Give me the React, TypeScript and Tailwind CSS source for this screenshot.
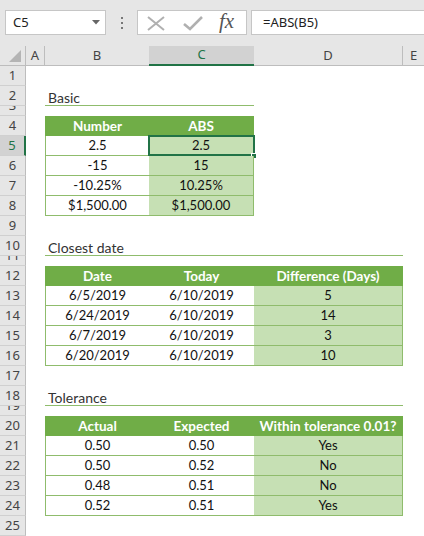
import React from 'react';

type Kind = 'none' | 'title' | 'line' | 'head' | 'white' | 'green';

interface CellDef {
  kind: Kind;
  text?: string;
  first?: boolean;
  last?: boolean;
  sel?: boolean;
}

interface RowDef {
  n: number;
  h?: number;
  active?: boolean;
  B?: CellDef;
  C?: CellDef;
  D?: CellDef;
}

const W = { A: 'w-[19px]', B: 'w-[104px]', C: 'w-[105px]', D: 'w-[149px]' };

const t = (text: string): CellDef => ({ kind: 'title', text, first: true });
const l: CellDef = { kind: 'line' };

function head3(a: string, b: string, c: string) {
  return {
    B: { kind: 'head' as Kind, text: a, first: true },
    C: { kind: 'head' as Kind, text: b },
    D: { kind: 'head' as Kind, text: c, last: true },
  };
}

function body3(a: string, b: string, c: string) {
  return {
    B: { kind: 'white' as Kind, text: a, first: true },
    C: { kind: 'white' as Kind, text: b },
    D: { kind: 'green' as Kind, text: c, last: true },
  };
}

const rows: RowDef[] = [
  { n: 1 },
  { n: 2, B: t('Basic'), C: l },
  { n: 3, h: 10 },
  { n: 4, B: { kind: 'head', text: 'Number', first: true }, C: { kind: 'head', text: 'ABS', last: true } },
  { n: 5, active: true, B: { kind: 'white', text: '2.5', first: true }, C: { kind: 'green', text: '2.5', last: true, sel: true } },
  { n: 6, B: { kind: 'white', text: '-15', first: true }, C: { kind: 'green', text: '15', last: true } },
  { n: 7, B: { kind: 'white', text: '-10.25%', first: true }, C: { kind: 'green', text: '10.25%', last: true } },
  { n: 8, B: { kind: 'white', text: '$1,500.00', first: true }, C: { kind: 'green', text: '$1,500.00', last: true } },
  { n: 9 },
  { n: 10, B: t('Closest date'), C: l, D: l },
  { n: 11, h: 10 },
  { n: 12, ...head3('Date', 'Today', 'Difference (Days)') },
  { n: 13, ...body3('6/5/2019', '6/10/2019', '5') },
  { n: 14, ...body3('6/24/2019', '6/10/2019', '14') },
  { n: 15, ...body3('6/7/2019', '6/10/2019', '3') },
  { n: 16, ...body3('6/20/2019', '6/10/2019', '10') },
  { n: 17 },
  { n: 18, B: t('Tolerance'), C: l, D: l },
  { n: 19, h: 10 },
  { n: 20, ...head3('Actual', 'Expected', 'Within tolerance 0.01?') },
  { n: 21, ...body3('0.50', '0.50', 'Yes') },
  { n: 22, ...body3('0.50', '0.52', 'No') },
  { n: 23, ...body3('0.48', '0.51', 'No') },
  { n: 24, ...body3('0.52', '0.51', 'Yes') },
  { n: 25 },
];

function Cell({ def, w }: { def?: CellDef; w: string }) {
  if (!def || def.kind === 'none') return <div className={`${w} shrink-0 h-full`} />;
  const side = `${def.first ? 'border-l' : ''} ${def.last ? 'border-r' : ''}`;
  if (def.kind === 'title' || def.kind === 'line') {
    return (
      <div className={`${w} shrink-0 h-full border-b border-[#8fbc6c] flex items-end pl-[3px] text-[14px] leading-[16px] text-[#333] whitespace-nowrap overflow-visible`}>
        <span className="translate-y-[1px]">{def.text}</span>
      </div>
    );
  }
  if (def.kind === 'head') {
    return (
      <div className={`${w} shrink-0 h-full bg-[#70ad47] border-[#70ad47] ${side} flex items-center justify-center text-[13.5px] font-bold text-white whitespace-nowrap`}>
        {def.text}
      </div>
    );
  }
  const bg = def.kind === 'green' ? 'bg-[#c6e0b4]' : 'bg-white';
  return (
    <div className={`${w} shrink-0 h-full relative ${bg} border-b border-[#8fbc6c] ${side} flex items-center justify-center text-[13px] text-[#111] whitespace-nowrap`}>
      {def.text}
      {def.sel && (
        <>
          <div className="absolute -left-px -top-[1px] -right-[2px] -bottom-[1px] border-2 border-[#217346] pointer-events-none" />
          <div className="absolute -right-[4px] -bottom-[4px] w-[6px] h-[6px] bg-[#217346] border border-white" />
        </>
      )}
    </div>
  );
}

function Row({ r }: { r: RowDef }) {
  const h = r.h ?? 20;
  return (
    <div className="flex" style={{ height: h }}>
      <div
        className={`w-[26px] shrink-0 h-full border-b border-r border-[#d0d0d0] overflow-hidden text-[13px] font-['Noto_Sans',sans-serif] ${
          r.active ? 'bg-[#d2d2d2] text-[#217346] border-r-2 border-r-[#217346]' : 'bg-[#e6e6e6] text-[#444] border-r-[#bdbdbd]'
        }`}
      >
        {h < 20 ? (
          <div className="h-[20px] -mt-[11px] leading-[20px] text-center">{r.n}</div>
        ) : (
          <div className="h-full leading-[19px] text-center">{r.n}</div>
        )}
      </div>
      <div className={`${W.A} shrink-0 h-full`} />
      <Cell def={r.B} w={W.B} />
      <Cell def={r.C} w={W.C} />
      <Cell def={r.D} w={W.D} />
      <div className="flex-1 h-full" />
    </div>
  );
}

function Toolbar() {
  return (
    <div className="h-[46px] bg-[#e6e6e6] flex items-start pt-[10px] pl-[5px] font-['Noto_Sans',sans-serif] text-[13px] text-[#222]">
      <div className="w-[101px] h-[25px] bg-white border border-[#c6c6c6] flex items-center pl-[7px] pr-[5px] justify-between">
        <span>C5</span>
        <svg width="8" height="5" viewBox="0 0 8 5">
          <path d="M0 0 L8 0 L4 4.5 Z" fill="#666" />
        </svg>
      </div>
      <div className="w-[31px] h-[25px] flex flex-col items-center justify-center gap-[3px]">
        <span className="w-[2px] h-[2px] bg-[#777]" />
        <span className="w-[2px] h-[2px] bg-[#777]" />
        <span className="w-[2px] h-[2px] bg-[#777]" />
      </div>
      <div className="w-[110px] h-[25px] bg-white border border-[#c6c6c6] flex items-center pl-[9px]">
        <svg width="18" height="15" viewBox="0 0 18 15" className="mt-[1px]">
          <path d="M1 1 L17 14 M17 1 L1 14" stroke="#b0b0b0" strokeWidth="2" fill="none" />
        </svg>
        <svg width="20" height="15" viewBox="0 0 20 15" className="ml-[18px] mt-[2px]">
          <path d="M1 8 L7 13 L19 1" stroke="#b0b0b0" strokeWidth="2.6" fill="none" />
        </svg>
        <span className="ml-[16px] font-['Liberation_Serif',serif] italic text-[21px] leading-none text-[#555] -mt-[2px]">fx</span>
      </div>
      <div className="flex-1 ml-[4px] h-[25px] bg-white border border-r-0 border-[#c6c6c6] flex items-center pl-[11px]">
        =ABS(B5)
      </div>
    </div>
  );
}

function ColHeaders() {
  const base = 'h-full shrink-0 flex items-center justify-center border-r border-[#bdbdbd] border-b border-b-[#bdbdbd]';
  return (
    <div className="h-[20px] flex bg-[#e6e6e6] font-['Noto_Sans',sans-serif] text-[13px] text-[#444]">
      <div className={`w-[26px] ${base} items-end justify-end pr-[4px] pb-[3px]`}>
        <svg width="12" height="12" viewBox="0 0 12 12">
          <path d="M12 0 L12 12 L0 12 Z" fill="#b4b4b4" />
        </svg>
      </div>
      <div className={`${W.A} ${base}`}>A</div>
      <div className={`${W.B} ${base} border-r-0`}>B</div>
      <div className={`${W.C} h-full shrink-0 flex items-center justify-center bg-[#d2d2d2] text-[#217346] border-b-2 border-[#217346]`}>C</div>
      <div className={`${W.D} ${base}`}>D</div>
      <div className={`flex-1 ${base} border-r-0`}>E</div>
    </div>
  );
}

export default function App() {
  return (
    <div className="w-[424px] h-[536px] overflow-hidden bg-white font-['Lato',sans-serif]">
      <Toolbar />
      <ColHeaders />
      {rows.map((r) => (
        <Row key={r.n} r={r} />
      ))}
    </div>
  );
}
